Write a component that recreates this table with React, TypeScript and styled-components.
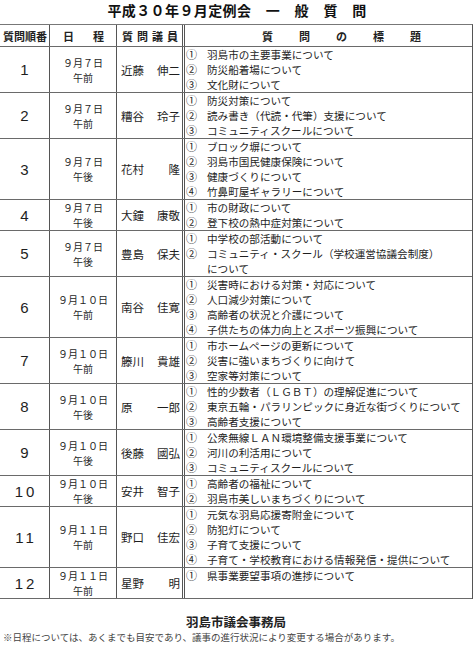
import React from 'react';
import styled, { createGlobalStyle } from 'styled-components';

interface QuestionType {
  no: string;
  date: string;
  time: string;
  family: string;
  given: string;
  items: string[];
}

const questions: QuestionType[] = [
  { no: '1', date: '９月７日', time: '午前', family: '近藤', given: '伸二', items: ['羽島市の主要事業について', '防災船着場について', '文化財について'] },
  { no: '2', date: '９月７日', time: '午前', family: '糟谷', given: '玲子', items: ['防災対策について', '読み書き（代読・代筆）支援について', 'コミュニティスクールについて'] },
  { no: '3', date: '９月７日', time: '午後', family: '花村', given: '隆', items: ['ブロック塀について', '羽島市国民健康保険について', '健康づくりについて', '竹鼻町屋ギャラリーについて'] },
  { no: '4', date: '９月７日', time: '午後', family: '大鐘', given: '康敬', items: ['市の財政について', '登下校の熱中症対策について'] },
  { no: '5', date: '９月７日', time: '午後', family: '豊島', given: '保夫', items: ['中学校の部活動について', 'コミュニティ・スクール（学校運営協議会制度）\nについて'] },
  { no: '6', date: '９月１０日', time: '午前', family: '南谷', given: '佳寛', items: ['災害時における対策・対応について', '人口減少対策について', '高齢者の状況と介護について', '子供たちの体力向上とスポーツ振興について'] },
  { no: '7', date: '９月１０日', time: '午前', family: '籐川', given: '貴雄', items: ['市ホームページの更新について', '災害に強いまちづくりに向けて', '空家等対策について'] },
  { no: '8', date: '９月１０日', time: '午後', family: '原', given: '一郎', items: ['性的少数者（ＬＧＢＴ）の理解促進について', '東京五輪・パラリンピックに身近な街づくりについて', '高齢者支援について'] },
  { no: '9', date: '９月１０日', time: '午後', family: '後藤', given: '國弘', items: ['公衆無線ＬＡＮ環境整備支援事業について', '河川の利活用について', 'コミュニティスクールについて'] },
  { no: '10', date: '９月１０日', time: '午後', family: '安井', given: '智子', items: ['高齢者の福祉について', '羽島市美しいまちづくりについて'] },
  { no: '11', date: '９月１１日', time: '午前', family: '野口', given: '佳宏', items: ['元気な羽島応援寄附金について', '防犯灯について', '子育て支援について', '子育て・学校教育における情報発信・提供について'] },
  { no: '12', date: '９月１１日', time: '午前', family: '星野', given: '明', items: ['県事業要望事項の進捗について'] },
];

const circled = ['①', '②', '③', '④', '⑤'];

const GlobalStyle = createGlobalStyle`
  body {
    margin: 0;
    background: #fff;
    color: #1e1e1e;
    font-family: "Noto Sans CJK JP", "Noto Sans", sans-serif;
  }
`;

const App: React.FC = () => {
  return (
    <Page>
      <GlobalStyle />
      <Title>平成３０年９月定例会　一　般　質　問</Title>
      <Table>
        <HeaderRow>
          <HeadCell $pad="0 3px">
            {['質', '問', '順', '番'].map((c) => <span key={c}>{c}</span>)}
          </HeadCell>
          <HeadCell $pad="0 12px 0 13px">
            <span>日</span>
            <span>程</span>
          </HeadCell>
          <HeadCell $pad="0 4px 0 5px" $double>
            {['質', '問', '議', '員'].map((c) => <span key={c}>{c}</span>)}
          </HeadCell>
          <HeadCell $pad="0 51px 0 77px" $last>
            {['質', '問', 'の', '標', '題'].map((c) => <span key={c}>{c}</span>)}
          </HeadCell>
        </HeaderRow>
        {questions.map((q) => (
          <Row key={q.no}>
            <NoCell>{q.no}</NoCell>
            <DateCell>
              <span>{q.date}</span>
              <span>{q.time}</span>
            </DateCell>
            <NameCell>
              <span>{q.family}</span>
              <span>{q.given}</span>
            </NameCell>
            <TopicCell>
              {q.items.map((item, i) => (
                <Topic key={item}>
                  <TopicMark>{circled[i]}</TopicMark>
                  <TopicText>{item}</TopicText>
                </Topic>
              ))}
            </TopicCell>
          </Row>
        ))}
      </Table>
      <Office>羽島市議会事務局</Office>
      <Note>※日程については、あくまでも目安であり、議事の進行状況により変更する場合があります。</Note>
    </Page>
  );
};

export default App;

const Page = styled.div`
  width: 474px;
  height: 645px;
  overflow: hidden;
`;

const Title = styled.h1`
  margin: 0;
  height: 24px;
  font-size: 14px;
  line-height: 20px;
  font-weight: 700;
  letter-spacing: 0.4px;
  text-align: center;
  color: #111;
`;

const Table = styled.div`
  width: 472px;
  border-top: 1px solid #777;
  border-right: 1px solid #555;
`;

const RowGrid = styled.div`
  display: grid;
  grid-template-columns: 50px 67px 68px 1fr;
  border-bottom: 1px solid #6a6a6a;
`;

const HeaderRow = styled(RowGrid)`
  height: 21px;
`;

const Row = styled(RowGrid)``;

const HeadCell = styled.div<{ $pad: string; $double?: boolean; $last?: boolean }>`
  display: flex;
  align-items: center;
  justify-content: space-between;
  padding: ${(p) => p.$pad};
  font-size: 11px;
  font-weight: 700;
  color: #222;
  border-right: ${(p) => (p.$last ? 'none' : p.$double ? '3px double #555' : '1px solid #555')};
`;

const NoCell = styled.div`
  display: flex;
  align-items: center;
  justify-content: center;
  font-family: "Liberation Sans", Arial, sans-serif;
  font-size: 15px;
  letter-spacing: 3px;
  padding-left: 3px;
  border-right: 1px solid #555;
`;

const DateCell = styled.div`
  display: flex;
  flex-direction: column;
  align-items: center;
  justify-content: center;
  font-size: 10px;
  line-height: 15px;
  border-right: 1px solid #555;
`;

const NameCell = styled.div`
  display: flex;
  align-items: center;
  justify-content: space-between;
  padding: 0 2px 0 4px;
  font-size: 11.5px;
  border-right: 3px double #555;
`;

const TopicCell = styled.div`
  display: flex;
  flex-direction: column;
  padding-left: 1px;
`;

const Topic = styled.div`
  display: grid;
  grid-template-columns: 21px 1fr;
  font-size: 10.6px;
  line-height: 15px;
`;

const TopicMark = styled.span`
  font-size: 11px;
`;

const TopicText = styled.span`
  white-space: pre;
`;

const Office = styled.div`
  margin-top: 14px;
  width: 472px;
  text-align: center;
  font-size: 12.5px;
  line-height: 17px;
  font-weight: 700;
  color: #222;
`;

const Note = styled.div`
  padding-left: 3px;
  font-size: 9.5px;
  line-height: 14px;
  color: #444;
  white-space: nowrap;
`;
